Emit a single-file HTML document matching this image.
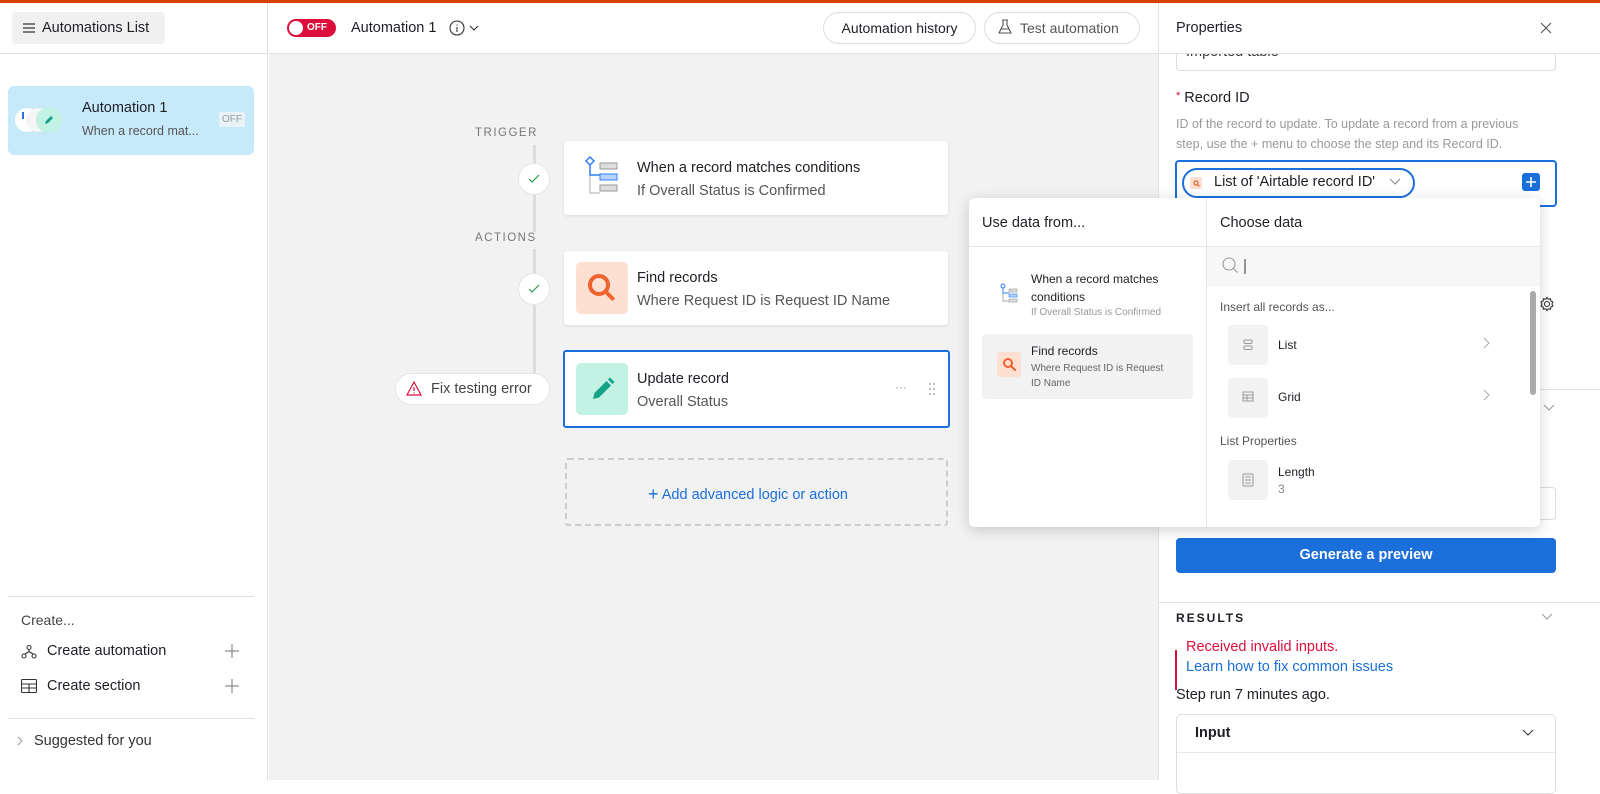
<!DOCTYPE html>
<html><head><meta charset="utf-8"><style>
*{box-sizing:border-box;margin:0;padding:0}
body{width:1600px;height:780px;overflow:hidden;font-family:"Liberation Sans",sans-serif;color:#1d1f25;background:#fff;position:relative;font-size:14px}
.a{position:absolute}
.t{white-space:nowrap}
</style></head><body>
<div class="a" style="left:0;top:0;width:1600px;height:3px;background:#d74108"></div>
<!-- sidebar -->
<div class="a" style="left:0;top:3px;width:268px;height:777px;border-right:1px solid #e0e0e0;background:#fff"></div>
<div class="a" style="left:0;top:53px;width:268px;height:1px;background:#e0e0e0"></div>
<div class="a" style="left:12px;top:12px;width:153px;height:32px;background:#f0f0f0;border-radius:4px"></div>
<svg class="a" style="left:22px;top:21px" width="14" height="14"><path d="M1 3h12M1 7h12M1 11h12" stroke="#333" stroke-width="1.3"/></svg>
<div class="a t" style="left:42px;top:20px;font-size:14.5px">Automations List</div>
<div class="a" style="left:8px;top:86px;width:246px;height:69px;background:#c7eafb;border-radius:6px"></div>
<div class="a" style="left:15px;top:108px;width:24px;height:24px;border-radius:50%;background:#fff"></div>
<div class="a" style="left:26px;top:108px;width:24px;height:24px;border-radius:50%;background:#f5f5f5"></div>
<div class="a" style="left:36px;top:107px;width:26px;height:26px;border-radius:50%;background:#c2f2e4"></div>
<svg class="a" style="left:43px;top:114px" width="12" height="12"><path d="M2 10l1-3 5-5 2 2-5 5z" fill="#12a285"/></svg>
<div class="a" style="left:22px;top:112px;width:2px;height:7px;background:#2a6fdb"></div>
<div class="a t" style="left:82px;top:100px;font-size:14.5px">Automation 1</div>
<div class="a t" style="left:82px;top:124px;font-size:12.5px;color:#555">When a record mat...</div>
<div class="a t" style="left:219px;top:112px;width:26px;height:15px;background:#e7f3f8;color:#999;font-size:10px;text-align:center;line-height:15px;border-radius:2px">OFF</div>
<div class="a" style="left:8px;top:596px;width:246px;height:1px;background:#e0e0e0"></div>
<div class="a t" style="left:21px;top:612px;font-size:14px;color:#444">Create...</div>
<svg class="a" style="left:21px;top:644px" width="16" height="16" fill="none" stroke="#333" stroke-width="1.1"><circle cx="8" cy="3.5" r="2"/><circle cx="3" cy="12" r="2"/><circle cx="13" cy="12" r="2"/><path d="M8 5.5v2M8 7.5L4 10M8 7.5l4 2.5"/></svg>
<div class="a t" style="left:47px;top:643px;font-size:14.5px">Create automation</div>
<svg class="a" style="left:225px;top:644px" width="14" height="14"><path d="M7 0v14M0 7h14" stroke="#777" stroke-width="1"/></svg>
<svg class="a" style="left:21px;top:679px" width="16" height="14" fill="none" stroke="#333" stroke-width="1.1"><rect x=".5" y=".5" width="15" height="13" rx="1"/><path d="M.5 5h15M.5 9h15M8 5v8.5"/></svg>
<div class="a t" style="left:47px;top:678px;font-size:14.5px">Create section</div>
<svg class="a" style="left:225px;top:679px" width="14" height="14"><path d="M7 0v14M0 7h14" stroke="#777" stroke-width="1"/></svg>
<div class="a" style="left:8px;top:718px;width:246px;height:1px;background:#e0e0e0"></div>
<svg class="a" style="left:16px;top:736px" width="8" height="10"><path d="M2 1l4 4-4 4" stroke="#999" fill="none"/></svg>
<div class="a t" style="left:34px;top:733px;font-size:14.5px;color:#333">Suggested for you</div>
<!-- header center -->
<div class="a" style="left:269px;top:53px;width:889px;height:727px;background:#f2f2f2"></div>
<div class="a" style="left:269px;top:53px;width:889px;height:1px;background:#e2e2e2"></div>
<div class="a" style="left:287px;top:19px;width:49px;height:18px;background:#dc0f3c;border-radius:9px"></div>
<div class="a" style="left:289px;top:21px;width:14px;height:14px;background:#fff;border-radius:50%"></div>
<div class="a t" style="left:307px;top:21px;font-size:10px;font-weight:bold;color:#fff;line-height:14px">OFF</div>
<div class="a t" style="left:351px;top:20px;font-size:14.5px">Automation 1</div>
<svg class="a" style="left:449px;top:20px" width="34" height="16" fill="none" stroke="#333" stroke-width="1.1"><circle cx="8" cy="8" r="7"/><path d="M8 7v5M8 4.5v1"/><path d="M21 6l4 4 4-4"/></svg>
<div class="a t" style="left:823px;top:12px;width:153px;height:32px;border:1px solid #ddd;border-radius:16px;background:#fff;font-size:14px;text-align:center;line-height:30px">Automation history</div>
<div class="a t" style="left:984px;top:12px;width:156px;height:32px;border:1px solid #ddd;border-radius:16px;background:#fff;font-size:14px;color:#555;line-height:30px;padding-left:35px">Test automation</div>
<svg class="a" style="left:998px;top:19px" width="14" height="16" fill="none" stroke="#555" stroke-width="1.1"><path d="M4 1h6M5 1v5L1 14h12L9 6V1M3 10h8"/></svg>
<!-- timeline -->
<div class="a" style="left:533px;top:145px;width:3px;height:233px;background:#ddd"></div>
<div class="a t" style="left:475px;top:127px;font-size:11.5px;letter-spacing:1.5px;color:#777">TRIGGER</div>
<div class="a t" style="left:475px;top:232px;font-size:11.5px;letter-spacing:1.5px;color:#777;background:#f2f2f2;padding-bottom:5px">ACTIONS</div>
<div class="a" style="left:518px;top:163px;width:32px;height:32px;border-radius:50%;background:#fff;border:1px solid #e5e5e5"></div>
<div class="a" style="left:518px;top:273px;width:32px;height:32px;border-radius:50%;background:#fff;border:1px solid #e5e5e5"></div>
<svg class="a" style="left:528px;top:174px" width="12" height="10"><path d="M1 5l3 3 7-7" stroke="#2e9c4f" fill="none" stroke-width="1.2"/></svg>
<svg class="a" style="left:528px;top:284px" width="12" height="10"><path d="M1 5l3 3 7-7" stroke="#2e9c4f" fill="none" stroke-width="1.2"/></svg>
<div class="a t" style="left:395px;top:373px;width:155px;height:32px;border-radius:16px;background:#fff;border:1px solid #e6e6e6;font-size:14.5px;color:#444;line-height:30px;padding-left:35px">Fix testing error</div>
<svg class="a" style="left:406px;top:381px" width="16" height="15" fill="none" stroke="#dc0f3c" stroke-width="1.2"><path d="M8 1L1 14h14z"/><path d="M8 6v4M8 11.5v1"/></svg>
<!-- cards -->
<div class="a" style="left:564px;top:141px;width:384px;height:74px;background:#fff;border-radius:3px;box-shadow:0 1px 3px rgba(0,0,0,.1)"></div>
<svg class="a" style="left:582px;top:155px" width="40" height="44"><path d="M8 8v30h10M8 20h10" stroke="#aaa" fill="none"/><path d="M8 8v12h10" stroke="#2d7ff9" fill="none" stroke-width="1.5"/><path d="M8 2l4 4-4 4-4-4z" fill="#fff" stroke="#2d7ff9" stroke-width="1.5"/><rect x="18" y="8" width="17" height="6" fill="#ddd" stroke="#999"/><rect x="18" y="19" width="17" height="6" fill="#b8d3fb" stroke="#2d7ff9"/><rect x="18" y="30" width="17" height="6" fill="#ddd" stroke="#999"/></svg>
<div class="a t" style="left:637px;top:160px;font-size:14.5px">When a record matches conditions</div>
<div class="a t" style="left:637px;top:183px;font-size:14.5px;color:#555">If Overall Status is Confirmed</div>
<div class="a" style="left:564px;top:251px;width:384px;height:74px;background:#fff;border-radius:3px;box-shadow:0 1px 3px rgba(0,0,0,.1)"></div>
<div class="a" style="left:576px;top:262px;width:52px;height:52px;background:#fde0d2;border-radius:5px"></div>
<svg class="a" style="left:586px;top:272px" width="32" height="32" fill="none" stroke="#f0622d" stroke-width="4"><circle cx="13" cy="13" r="9"/><path d="M19.5 19.5l7 7" stroke-linecap="round"/></svg>
<div class="a t" style="left:637px;top:270px;font-size:14.5px">Find records</div>
<div class="a t" style="left:637px;top:293px;font-size:14.5px;color:#555">Where Request ID is Request ID Name</div>
<div class="a" style="left:563px;top:350px;width:387px;height:78px;background:#fff;border:2px solid #1a6fdb;border-radius:3px"></div>
<div class="a" style="left:576px;top:363px;width:52px;height:52px;background:#c2f2e4;border-radius:5px"></div>
<svg class="a" style="left:590px;top:376px" width="26" height="26"><path d="M3 23l1.5-6 12-12 4.5 4.5-12 12zM18 3.5l2-2 4.5 4.5-2 2z" fill="#12a285"/></svg>
<div class="a t" style="left:637px;top:371px;font-size:14.5px">Update record</div>
<div class="a t" style="left:637px;top:394px;font-size:14.5px;color:#555">Overall Status</div>
<div class="a t" style="left:895px;top:380px;font-size:12px;color:#999">···</div>
<svg class="a" style="left:929px;top:383px" width="6" height="12" fill="#aaa"><circle cx="1" cy="1" r="1"/><circle cx="5" cy="1" r="1"/><circle cx="1" cy="6" r="1"/><circle cx="5" cy="6" r="1"/><circle cx="1" cy="11" r="1"/><circle cx="5" cy="11" r="1"/></svg>
<div class="a" style="left:565px;top:458px;width:383px;height:68px;border:2px dashed #ccc;border-radius:3px"></div>
<div class="a t" style="left:648px;top:483px;font-size:14.5px;color:#1a6fdb"><span style="font-size:18px;position:relative;top:1px">+</span> Add advanced logic or action</div>
<!-- right panel -->
<div class="a" style="left:1158px;top:3px;width:442px;height:777px;background:#fff;border-left:1px solid #e2e2e2"></div>
<div class="a" style="left:1176px;top:38px;width:380px;height:33px;border:1px solid #ddd;border-radius:4px"></div>
<div class="a t" style="left:1186px;top:44px;font-size:14.5px;color:#333">Imported table</div>
<div class="a" style="left:1159px;top:3px;width:441px;height:51px;background:#fff;border-bottom:1px solid #e2e2e2"></div>
<div class="a t" style="left:1176px;top:20px;font-size:14.5px;font-weight:500">Properties</div>
<svg class="a" style="left:1540px;top:22px" width="12" height="12"><path d="M1 1l10 10M11 1L1 11" stroke="#555" stroke-width="1.1"/></svg>
<div class="a t" style="left:1176px;top:90px;font-size:14.5px"><span style="color:#dc0f3c;font-size:11px;vertical-align:top">*</span> Record ID</div>
<div class="a" style="left:1176px;top:114px;font-size:12.5px;color:#999;line-height:20px;width:370px">ID of the record to update. To update a record from a previous step, use the + menu to choose the step and its Record ID.</div>
<div class="a" style="left:1175px;top:160px;width:382px;height:47px;border:2px solid #1a6fdb;border-radius:4px"></div>
<div class="a" style="left:1182px;top:168px;width:233px;height:30px;border:2px solid #1a6fdb;border-radius:15px"></div>
<div class="a" style="left:1190px;top:177px;width:12px;height:12px;background:#fde0d2;border-radius:2px"></div>
<svg class="a" style="left:1193px;top:180px" width="7" height="7" fill="none" stroke="#f0622d" stroke-width="1.2"><circle cx="3" cy="3" r="2"/><path d="M4.5 4.5L6.5 6.5"/></svg>
<div class="a t" style="left:1214px;top:174px;font-size:14.5px">List of 'Airtable record ID'</div>
<svg class="a" style="left:1389px;top:178px" width="12" height="8"><path d="M1 1l5 5 5-5" stroke="#888" fill="none"/></svg>
<div class="a" style="left:1522px;top:173px;width:18px;height:18px;background:#1a6fdb;border-radius:3px"></div>
<svg class="a" style="left:1524px;top:175px" width="14" height="14"><path d="M7 2v10M2 7h10" stroke="#fff" stroke-width="1.6"/></svg>
<svg class="a" style="left:1539px;top:296px" width="16" height="16" fill="none" stroke="#333" stroke-width="1.1"><circle cx="8" cy="8" r="2.5"/><path d="M8 1.5l1.3 1.8 2.2-.5.4 2.2 2 1-1 2 1 2-2 1-.4 2.2-2.2-.5L8 14.5l-1.3-1.8-2.2.5-.4-2.2-2-1 1-2-1-2 2-1 .4-2.2 2.2.5z"/></svg>
<div class="a" style="left:1540px;top:389px;width:60px;height:1px;background:#e2e2e2"></div>
<svg class="a" style="left:1543px;top:404px" width="12" height="8"><path d="M1 1l5 5 5-5" stroke="#999" fill="none"/></svg>
<div class="a" style="left:1520px;top:487px;width:36px;height:33px;border:1px solid #ddd;border-radius:4px"></div>
<div class="a t" style="left:1176px;top:538px;width:380px;height:35px;background:#1a6fdb;border-radius:4px;color:#fff;font-size:14.5px;font-weight:bold;text-align:center;line-height:35px">Generate a preview</div>
<div class="a" style="left:1159px;top:602px;width:441px;height:1px;background:#e2e2e2"></div>
<div class="a t" style="left:1176px;top:611px;font-size:12px;font-weight:bold;letter-spacing:2px">RESULTS</div>
<svg class="a" style="left:1541px;top:613px" width="12" height="8"><path d="M1 1l5 5 5-5" stroke="#999" fill="none"/></svg>
<div class="a" style="left:1175px;top:650px;width:2px;height:40px;background:#dc0f3c"></div>
<div class="a t" style="left:1186px;top:639px;font-size:14.5px;color:#dc0f3c">Received invalid inputs.</div>
<div class="a t" style="left:1186px;top:659px;font-size:14.5px;color:#1a6fdb">Learn how to fix common issues</div>
<div class="a t" style="left:1176px;top:687px;font-size:14.5px">Step run 7 minutes ago.</div>
<div class="a" style="left:1176px;top:714px;width:380px;height:80px;border:1px solid #ddd;border-radius:5px"></div>
<div class="a" style="left:1177px;top:752px;width:378px;height:1px;background:#e6e6e6"></div>
<div class="a t" style="left:1195px;top:725px;font-size:14.5px;font-weight:bold">Input</div>
<svg class="a" style="left:1522px;top:729px" width="12" height="8"><path d="M1 1l5 5 5-5" stroke="#333" fill="none"/></svg>
<!-- popup -->
<div class="a" style="left:969px;top:198px;width:571px;height:329px;background:#fff;border-radius:5px;box-shadow:0 3px 14px rgba(0,0,0,.18);overflow:hidden">
  <div class="a" style="left:237px;top:0;width:1px;height:329px;background:#e6e6e6"></div>
  <div class="a" style="left:0;top:48px;width:571px;height:1px;background:#e6e6e6"></div>
  <div class="a t" style="left:13px;top:17px;font-size:14.5px">Use data from...</div>
  <div class="a t" style="left:251px;top:17px;font-size:14.5px">Choose data</div>
  <div class="a" style="left:238px;top:49px;width:333px;height:39px;background:#f7f7f7"></div>
  <svg class="a" style="left:252px;top:58px" width="30" height="20" fill="none" stroke="#999" stroke-width="1.1"><circle cx="8" cy="8" r="6"/><path d="M12.5 12.5l4 4"/><path d="M24 3v15" stroke="#444"/></svg>
  <svg class="a" style="left:30px;top:85px" width="20" height="24"><path d="M4 4v14h6M4 10h6" stroke="#aaa" fill="none"/><path d="M4 4v6h6" stroke="#2d7ff9" fill="none"/><circle cx="4" cy="3" r="2" fill="#fff" stroke="#2d7ff9"/><rect x="10" y="6" width="8" height="3" fill="#ddd" stroke="#999" stroke-width=".6"/><rect x="10" y="11" width="8" height="3" fill="#b8d3fb" stroke="#2d7ff9" stroke-width=".6"/><rect x="10" y="16" width="8" height="3" fill="#ddd" stroke="#999" stroke-width=".6"/></svg>
  <div class="a" style="left:62px;top:72px;font-size:12px;line-height:18px;width:170px">When a record matches conditions</div>
  <div class="a t" style="left:62px;top:109px;font-size:10px;color:#999">If Overall Status is Confirmed</div>
  <div class="a" style="left:13px;top:136px;width:211px;height:65px;background:#f2f2f2;border-radius:4px"></div>
  <div class="a" style="left:28px;top:154px;width:24px;height:25px;background:#fde0d2;border-radius:3px"></div>
  <svg class="a" style="left:33px;top:159px" width="15" height="15" fill="none" stroke="#f0622d" stroke-width="2"><circle cx="6" cy="6" r="4"/><path d="M9 9l4 4" stroke-linecap="round"/></svg>
  <div class="a t" style="left:62px;top:146px;font-size:12px">Find records</div>
  <div class="a" style="left:62px;top:163px;font-size:10px;color:#666;line-height:15px;width:140px">Where Request ID is Request ID Name</div>
  <div class="a t" style="left:251px;top:102px;font-size:12px;color:#555">Insert all records as...</div>
  <div class="a" style="left:259px;top:127px;width:40px;height:40px;background:#f2f2f2;border-radius:4px"></div>
  <svg class="a" style="left:273px;top:140px" width="12" height="14" fill="none" stroke="#999"><rect x="2" y="2" width="8" height="3.5" rx="1"/><rect x="2" y="8" width="8" height="3.5" rx="1"/></svg>
  <div class="a t" style="left:309px;top:140px;font-size:12px">List</div>
  <svg class="a" style="left:514px;top:139px" width="8" height="12"><path d="M1 1l5 5-5 5" stroke="#aaa" fill="none"/></svg>
  <div class="a" style="left:259px;top:180px;width:40px;height:40px;background:#f2f2f2;border-radius:4px"></div>
  <svg class="a" style="left:273px;top:193px" width="12" height="12" fill="none" stroke="#999"><rect x="1" y="1" width="10" height="9"/><path d="M1 4h10M1 7h10M5 4v6"/></svg>
  <div class="a t" style="left:309px;top:192px;font-size:12px">Grid</div>
  <svg class="a" style="left:514px;top:191px" width="8" height="12"><path d="M1 1l5 5-5 5" stroke="#aaa" fill="none"/></svg>
  <div class="a t" style="left:251px;top:236px;font-size:12px;color:#555">List Properties</div>
  <div class="a" style="left:259px;top:262px;width:40px;height:40px;background:#f2f2f2;border-radius:4px"></div>
  <svg class="a" style="left:273px;top:275px" width="12" height="14" fill="none" stroke="#999"><rect x="1" y="1" width="10" height="12" rx="1"/><path d="M3 4h6M3 7h6M3 10h6"/></svg>
  <div class="a t" style="left:309px;top:267px;font-size:12px">Length</div>
  <div class="a t" style="left:309px;top:284px;font-size:12px;color:#888">3</div>
  <div class="a" style="left:561px;top:93px;width:6px;height:104px;background:#aaa;border-radius:3px"></div>
</div>
</body></html>
